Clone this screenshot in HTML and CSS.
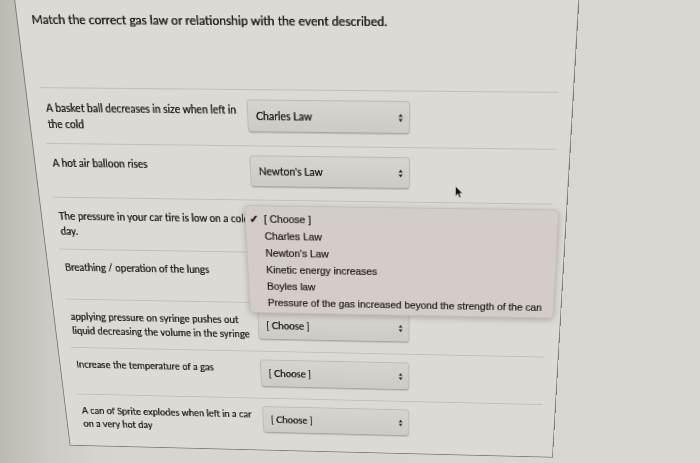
FILE: index.html
```html
<!DOCTYPE html>
<html lang="en">
<head>
<meta charset="utf-8">
<title>Matching question</title>
<link rel="stylesheet" href="styles.css">
</head>
<body>
<div class="stage">
  <div class="card">
    <div class="prompt">Match the correct gas law or relationship with the event described.</div>
    <div class="rows">
      <div class="row">
        <div class="label">A basket ball decreases in size when left in<br>the cold</div>
        <div class="cell">
          <div class="select"><span>Charles Law</span><svg class="arrows" viewBox="0 0 5 9" width="5" height="9"><polygon points="0.4,3.6 2.5,0.4 4.6,3.6"/><polygon points="0.4,5.4 2.5,8.6 4.6,5.4"/></svg></div>
        </div>
      </div>
      <div class="row">
        <div class="label">A hot air balloon rises</div>
        <div class="cell">
          <div class="select"><span>Newton's Law</span><svg class="arrows" viewBox="0 0 5 9" width="5" height="9"><polygon points="0.4,3.6 2.5,0.4 4.6,3.6"/><polygon points="0.4,5.4 2.5,8.6 4.6,5.4"/></svg></div>
        </div>
      </div>
      <div class="row">
        <div class="label">The pressure in your car tire is low on a cold<br>day.</div>
        <div class="cell">
          <div class="select"><span>[ Choose ]</span><svg class="arrows" viewBox="0 0 5 9" width="5" height="9"><polygon points="0.4,3.6 2.5,0.4 4.6,3.6"/><polygon points="0.4,5.4 2.5,8.6 4.6,5.4"/></svg></div>
          <div class="menu">
            <div class="item"><span class="check">✓</span>[ Choose ]</div>
            <div class="item">Charles Law</div>
            <div class="item">Newton's Law</div>
            <div class="item">Kinetic energy increases</div>
            <div class="item">Boyles law</div>
            <div class="item">Pressure of the gas increased beyond the strength of the can</div>
          </div>
        </div>
      </div>
      <div class="row">
        <div class="label">Breathing / operation of the lungs</div>
        <div class="cell">
          <div class="select"><span>[ Choose ]</span><svg class="arrows" viewBox="0 0 5 9" width="5" height="9"><polygon points="0.4,3.6 2.5,0.4 4.6,3.6"/><polygon points="0.4,5.4 2.5,8.6 4.6,5.4"/></svg></div>
        </div>
      </div>
      <div class="row">
        <div class="label">applying pressure on syringe pushes out<br>liquid decreasing the volume in the syringe</div>
        <div class="cell">
          <div class="select"><span>[ Choose ]</span><svg class="arrows" viewBox="0 0 5 9" width="5" height="9"><polygon points="0.4,3.6 2.5,0.4 4.6,3.6"/><polygon points="0.4,5.4 2.5,8.6 4.6,5.4"/></svg></div>
        </div>
      </div>
      <div class="row">
        <div class="label">Increase the temperature of a gas</div>
        <div class="cell">
          <div class="select"><span>[ Choose ]</span><svg class="arrows" viewBox="0 0 5 9" width="5" height="9"><polygon points="0.4,3.6 2.5,0.4 4.6,3.6"/><polygon points="0.4,5.4 2.5,8.6 4.6,5.4"/></svg></div>
        </div>
      </div>
      <div class="row">
        <div class="label">A can of Sprite explodes when left in a car<br>on a very hot day</div>
        <div class="cell">
          <div class="select"><span>[ Choose ]</span><svg class="arrows" viewBox="0 0 5 9" width="5" height="9"><polygon points="0.4,3.6 2.5,0.4 4.6,3.6"/><polygon points="0.4,5.4 2.5,8.6 4.6,5.4"/></svg></div>
        </div>
      </div>
    </div>
  </div>
  <svg class="cursor" viewBox="0 0 9 13" width="9" height="13"><path d="M0.5 0.5 L0.5 10.8 L3 8.5 L4.7 12.3 L6.3 11.6 L4.7 7.9 L8 7.9 Z"/></svg>
</div>
</body>
</html>
```

FILE: styles.css
```css
html, body {
  margin: 0;
  height: 100%;
  overflow: hidden;
}

body {
  background: linear-gradient(90deg, #bcbab3 0, #cccac4 45px, #d6d5cf 110px, #d8d7d1 100%);
  font-family: Lato, "Open Sans", "Liberation Sans", sans-serif;
  color: #2e2e2e;
}

.stage {
  position: relative;
  width: 720px;
  height: 484px;
  transform-origin: 0 0;
  transform: matrix3d(1.004148, 0.005294, 0, -0.0000443786,
                      0.141424, 1.094478, 0, 0.000353128,
                      0, 0, 1, 0,
                      -11.6671, -5.7750, 0, 1);
}

.card {
  margin-left: 25px;
  width: 549px;
  box-sizing: border-box;
  border: 1px solid #7f7e79;
  border-top: none;
  background: #dcdad4;
  padding: 14px 14px 8px;
}

.prompt {
  font-size: 12px;
  line-height: 18px;
  color: #1a1a1a;
  text-shadow: 0 0 0.4px #1a1a1a;
  margin-bottom: 55px;
}

.row {
  display: flex;
  align-items: flex-start;
  gap: 8px;
  height: 55px;
  box-sizing: border-box;
  border-top: 1px solid #c1bfb9;
  padding-left: 4px;
}

.label {
  width: 197px;
  flex: none;
  padding-top: 11px;
  font-size: 10.5px;
  line-height: 16px;
  white-space: nowrap;
  color: #222;
  text-shadow: 0 0 0.4px #222;
}

.cell {
  position: relative;
  padding-top: 9px;
}

.select {
  display: flex;
  align-items: center;
  justify-content: space-between;
  width: 164px;
  height: 32px;
  box-sizing: border-box;
  padding: 0 6px 0 8px;
  border: 1px solid #bdbbb5;
  border-bottom-color: #aaa8a2;
  border-radius: 4px;
  background: linear-gradient(#d6d4cf, #cccbc6);
  box-shadow: 0 1px 1px rgba(0, 0, 0, 0.14);
  font-size: 10.6px;
  color: #222;
  text-shadow: 0 0 0.4px #222;
}

.arrows {
  fill: #2a2a2a;
}

.menu {
  position: absolute;
  z-index: 5;
  top: 5px;
  left: -8px;
  width: 325px;
  box-sizing: border-box;
  padding: 4px 0 2px;
  background: #d4ccc8;
  border: 1px solid rgba(0, 0, 0, 0.07);
  border-radius: 5px;
  box-shadow: 0 2px 7px rgba(0, 0, 0, 0.22);
  font-family: "Liberation Sans", Arial, sans-serif;
  font-size: 10.8px;
  color: #161616;
  -webkit-text-stroke: 0.2px #161616;
}

.item {
  position: relative;
  height: 18px;
  line-height: 18px;
  padding-left: 19px;
  white-space: nowrap;
}

.check {
  position: absolute;
  left: 4px;
  top: 0;
  font-size: 11px;
  font-weight: bold;
}

.cursor {
  position: absolute;
  left: 459px;
  top: 180px;
  fill: #151515;
  stroke: #e6e6e6;
  stroke-width: 0.6;
}
```
